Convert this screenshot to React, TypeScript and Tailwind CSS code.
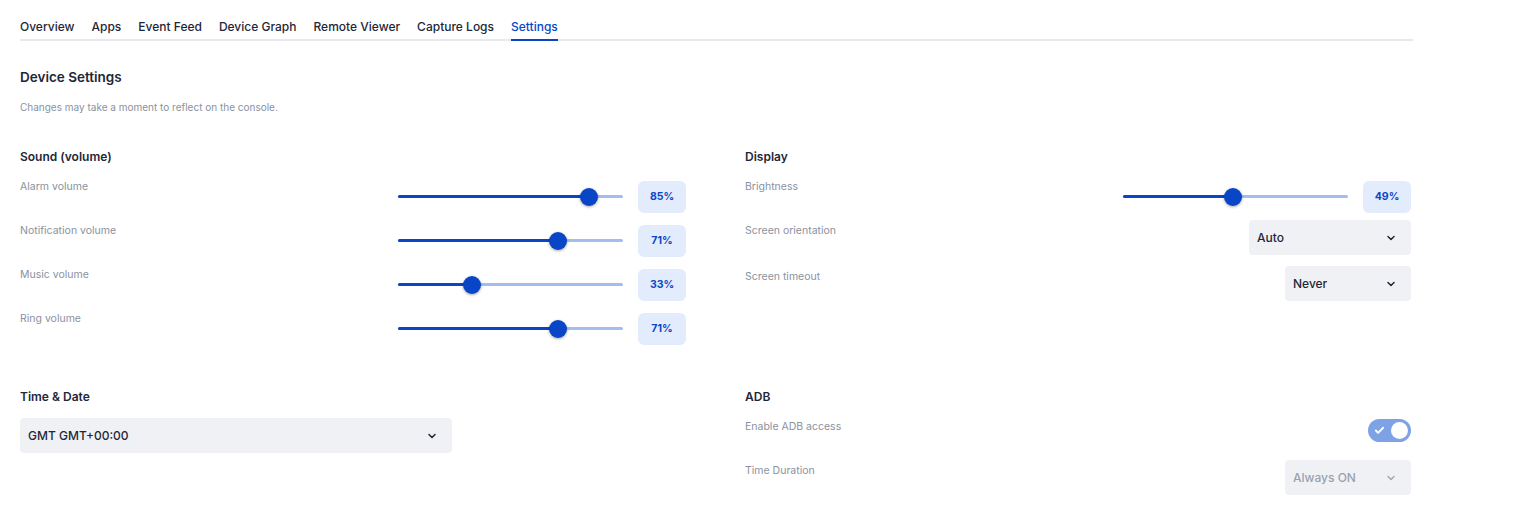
import { ChevronDown, Check } from "lucide-react";

const tabs = ["Overview", "Apps", "Event Feed", "Device Graph", "Remote Viewer", "Capture Logs", "Settings"];

const sound = [
  { label: "Alarm volume", value: 85 },
  { label: "Notification volume", value: 71 },
  { label: "Music volume", value: 33 },
  { label: "Ring volume", value: 71 },
];

function Slider({ value }: { value: number }) {
  return (
    <div className="relative w-[225px] h-[20px]">
      <div className="absolute left-0 right-0 top-[8px] h-[3px] rounded-full bg-[#a4bdee]" />
      <div className="absolute left-0 top-[8px] h-[3px] rounded-full bg-[#0846c7]" style={{ width: `${value}%` }} />
      <div
        className="absolute top-[1px] w-[18px] h-[18px] -ml-[9px] rounded-full bg-[#0846c7] shadow-[0_1px_3px_rgba(0,0,0,0.35)]"
        style={{ left: `${value}%` }}
      />
    </div>
  );
}

function SliderRow({ label, value }: { label: string; value: number }) {
  return (
    <div className="flex justify-between items-start">
      <span className="text-[10.5px] leading-4 text-[#8a929f]">{label}</span>
      <div className="flex items-center gap-[15px] mt-[2px]">
        <Slider value={value} />
        <div className="w-12 h-8 rounded-md bg-[#e2ecfd] flex items-center justify-center text-[10.5px] font-bold text-[#0b46c6]">
          {value}%
        </div>
      </div>
    </div>
  );
}

function Select({ value, width, disabled }: { value: string; width: string; disabled?: boolean }) {
  return (
    <div className={`${width} h-[35px] rounded bg-[#f0f1f5] flex items-center justify-between pl-2 pr-[14px]`}>
      <span className={`text-[12px] font-medium ${disabled ? "text-[#9aa1ac]" : "text-[#1e2738]"}`}>{value}</span>
      <ChevronDown size={12} strokeWidth={3} className={disabled ? "text-[#a3a9b3]" : "text-[#1e2738]"} />
    </div>
  );
}

export default function App() {
  return (
    <div className="pl-5 pr-[103px] pt-[17px] bg-white min-h-[516px] font-['Inter',sans-serif] text-[#1e2738]">
      {/* Tabs */}
      <div className="flex gap-[17px] border-b-2 border-[#e7e9ee]">
        {tabs.map((t) => (
          <div
            key={t}
            className={`pb-[2px] leading-5 text-[12px] font-medium -mb-[2px] border-b-2 ${
              t === "Settings" ? "text-[#0b46c6] border-[#0b46c6]" : "text-[#1e2738] border-transparent"
            }`}
          >
            {t}
          </div>
        ))}
      </div>

      <h1 className="mt-[26px] text-[13.5px] leading-5 font-semibold">Device Settings</h1>
      <p className="mt-[12px] text-[10px] leading-4 text-[#8a929f]">Changes may take a moment to reflect on the console.</p>

      <div className="grid grid-cols-2 gap-x-[59px] gap-y-[42px] mt-[32px] pr-[2px]">
        {/* Sound */}
        <div>
          <h2 className="text-[12px] leading-5 font-semibold">Sound (volume)</h2>
          <div className="mt-3 flex flex-col gap-[10px]">
            {sound.map((s) => (
              <SliderRow key={s.label} label={s.label} value={s.value} />
            ))}
          </div>
        </div>

        {/* Display */}
        <div>
          <h2 className="text-[12px] leading-5 font-semibold">Display</h2>
          <div className="mt-3">
            <SliderRow label="Brightness" value={49} />
          </div>
          <div className="mt-[7px] flex justify-between items-start">
            <span className="mt-[3px] text-[10.5px] leading-4 text-[#8a929f]">Screen orientation</span>
            <Select value="Auto" width="w-[162px]" />
          </div>
          <div className="mt-[11px] flex justify-between items-start">
            <span className="mt-[3px] text-[10.5px] leading-4 text-[#8a929f]">Screen timeout</span>
            <Select value="Never" width="w-[126px]" />
          </div>
        </div>

        {/* Time & Date */}
        <div>
          <h2 className="text-[12px] leading-5 font-semibold">Time &amp; Date</h2>
          <div className="mt-[11px]">
            <Select value="GMT GMT+00:00" width="w-[432px]" />
          </div>
        </div>

        {/* ADB */}
        <div>
          <h2 className="text-[12px] leading-5 font-semibold">ADB</h2>
          <div className="mt-3 flex justify-between items-start">
            <span className="text-[10.5px] leading-4 text-[#8a929f]">Enable ADB access</span>
            <div className="w-[43px] h-[23px] rounded-full bg-[#7ea2e6] flex items-center justify-between pl-[6px] pr-[3px]">
              <Check size={11} strokeWidth={4} className="text-white" />
              <div className="w-[17px] h-[17px] rounded-full bg-white" />
            </div>
          </div>
          <div className="mt-[18px] flex justify-between items-start">
            <span className="mt-[3px] text-[10.5px] leading-4 text-[#8a929f]">Time Duration</span>
            <Select value="Always ON" width="w-[126px]" disabled />
          </div>
        </div>
      </div>
    </div>
  );
}
